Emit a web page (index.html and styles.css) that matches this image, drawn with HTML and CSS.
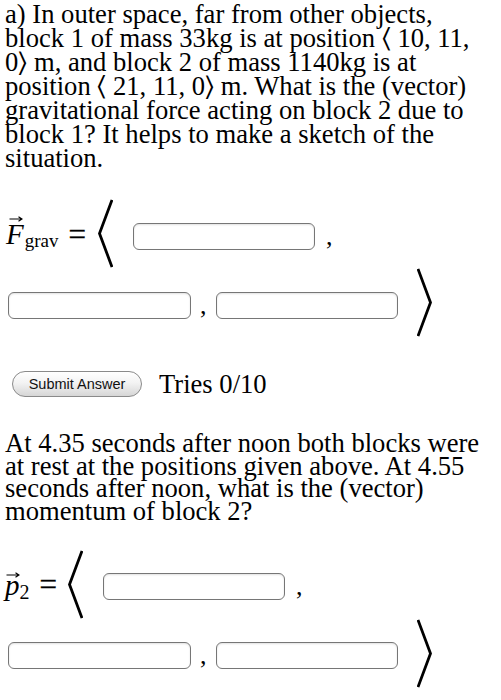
FILE: index.html
```html
<!DOCTYPE html>
<html>
<head>
<meta charset="utf-8">
<link rel="stylesheet" href="styles.css">
</head>
<body>
<div class="page">
  <p class="q">a) In outer space, far from other objects,<br>block 1 of mass 33kg is at position &#x2329; 10, 11,<br>0&#x232A; m, and block 2 of mass 1140kg is at<br>position &#x2329; 21, 11, 0&#x232A; m. What is the (vector)<br>gravitational force acting on block 2 due to<br>block 1? It helps to make a sketch of the<br>situation.</p>

  <div class="eq">
    <div class="row">
      <div class="lhs lhs-f">
        <span class="var"><span class="vec">F<svg class="arrow" viewBox="0 0 14 6"><path d="M0.5 3H12.5M9.5 0.8L13 3L9.5 5.2" fill="none" stroke="#000" stroke-width="1.2"/></svg></span><span class="sub">grav</span></span>
        <span class="eqs">=</span>
      </div>
      <svg class="br br-l" viewBox="0 0 15 69"><polyline points="14,1 1.5,34.5 14,68" fill="none" stroke="#000" stroke-width="2.8"/></svg>
      <span class="box b1"></span>
      <span class="comma">,</span>
    </div>
    <div class="row">
      <span class="box b2"></span>
      <span class="comma c2">,</span>
      <span class="box b3"></span>
      <svg class="br br-r" viewBox="0 0 15 69"><polyline points="1,1 13.5,34.5 1,68" fill="none" stroke="#000" stroke-width="2.8"/></svg>
    </div>
  </div>

  <div class="submit">
    <button class="btn" type="button">Submit Answer</button>
    <span class="tries">Tries 0/10</span>
  </div>

  <p class="q q2">At 4.35 seconds after noon both blocks were<br>at rest at the positions given above. At 4.55<br>seconds after noon, what is the (vector)<br>momentum of block 2?</p>

  <div class="eq">
    <div class="row">
      <div class="lhs lhs-p">
        <span class="var"><span class="vec vp">p<svg class="arrow" viewBox="0 0 14 6"><path d="M0.5 3H12.5M9.5 0.8L13 3L9.5 5.2" fill="none" stroke="#000" stroke-width="1.2"/></svg></span><span class="sub sub2">2</span></span>
        <span class="eqs">=</span>
      </div>
      <svg class="br br-l br-lp" viewBox="0 0 15 69"><polyline points="14,1 1.5,34.5 14,68" fill="none" stroke="#000" stroke-width="2.8"/></svg>
      <span class="box b1"></span>
      <span class="comma">,</span>
    </div>
    <div class="row">
      <span class="box b2"></span>
      <span class="comma c2">,</span>
      <span class="box b3"></span>
      <svg class="br br-r" viewBox="0 0 15 69"><polyline points="1,1 13.5,34.5 1,68" fill="none" stroke="#000" stroke-width="2.8"/></svg>
    </div>
  </div>

  <div class="next"></div>
</div>
</body>
</html>
```

FILE: styles.css
```css
html, body {
  margin: 0;
  padding: 0;
  background: #fff;
  overflow: hidden;
}

.page {
  padding: 2px 5px 0 5px;
  font-family: "Liberation Serif", "Times New Roman", serif;
  color: #000;
}

.q {
  margin: 0;
  font-size: 26.6px;
  line-height: 24px;
}

.eq {
  margin-top: 29px;
}

.row {
  display: flex;
  align-items: center;
  height: 69px;
}

.lhs {
  display: flex;
  align-items: center;
  justify-content: space-between;
}

.lhs-f {
  width: 81px;
}

.lhs-p {
  width: 52px;
}

.var {
  display: inline-flex;
  align-items: baseline;
  font-size: 29px;
  line-height: 30px;
  padding-top: 4px;
  white-space: nowrap;
}

.vec {
  position: relative;
  display: inline-block;
  font-style: italic;
  margin-left: 1px;
}

.vec .arrow {
  position: absolute;
  left: 3px;
  top: -3px;
  width: 14px;
  height: 6px;
}

.vp {
  margin-left: 0;
}

.vp .arrow {
  left: 1px;
  top: 2px;
}

.sub {
  font-size: 19px;
  position: relative;
  top: 3px;
  margin-left: 1px;
}

.sub2 {
  font-size: 20px;
  top: 4px;
  margin-left: 0;
}

.eqs {
  font-size: 31px;
  line-height: 30px;
  padding-top: 2px;
  -webkit-text-stroke: 0.4px #000;
}

.br {
  width: 15px;
  height: 69px;
  flex: none;
}

.br-l {
  margin-left: 12px;
}

.br-lp {
  margin-left: 11px;
}

.br-r {
  margin-left: 19px;
}

.box {
  display: block;
  flex: none;
  width: 182px;
  height: 27px;
  box-sizing: border-box;
  border: 1.5px solid #767676;
  border-radius: 6px;
  background: #fff;
  box-shadow: inset 0 1px 2px rgba(0, 0, 0, 0.12);
  margin-top: 5px;
}

.b1 {
  margin-left: 20px;
}

.b2 {
  margin-left: 3px;
  width: 183px;
}

.b3 {
  margin-left: 9px;
}

.comma {
  font-size: 26px;
  margin-left: 11px;
  padding-top: 6px;
}

.c2 {
  margin-left: 9px;
}

.submit {
  display: flex;
  align-items: center;
  margin-top: 34px;
  height: 26px;
}

.btn {
  margin: 0 0 0 7px;
  width: 130px;
  height: 26px;
  padding: 0;
  border: 1px solid #8a8a8a;
  border-radius: 13px;
  background: linear-gradient(#ffffff, #f3f3f3 45%, #d6d6d6);
  font-family: "Liberation Sans", Arial, sans-serif;
  font-size: 14.5px;
  color: #111;
}

.tries {
  margin-left: 17px;
  font-size: 26.6px;
  line-height: 26px;
}

.q2 {
  margin-top: 35px;
  line-height: 22.7px;
}

.q2 + .eq {
  margin-top: 27px;
}

.next {
  margin: 12px 0 0 158px;
  width: 174px;
  height: 20px;
  border-top: 1px solid #888;
}
```
